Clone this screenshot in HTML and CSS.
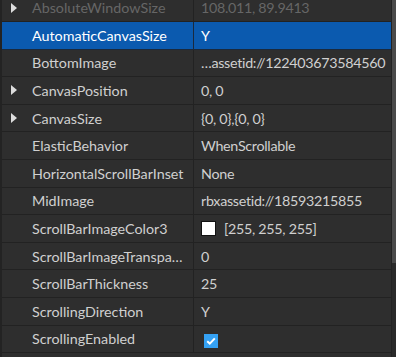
FILE: index.html
```html
<!DOCTYPE html>
<html>
<head>
<meta charset="utf-8">
<link rel="stylesheet" href="styles.css">
</head>
<body>
<div class="panel">
  <div class="list">
    <div class="row disabled"><div class="name"><span class="arrow"></span>AbsoluteWindowSize</div><div class="value">108.011, 89.9413</div></div>
    <div class="row selected"><div class="name">AutomaticCanvasSize</div><div class="value">Y</div></div>
    <div class="row"><div class="name">BottomImage</div><div class="value">…assetid://122403673584560</div></div>
    <div class="row"><div class="name"><span class="arrow"></span>CanvasPosition</div><div class="value">0, 0</div></div>
    <div class="row"><div class="name"><span class="arrow"></span>CanvasSize</div><div class="value">{0, 0},{0, 0}</div></div>
    <div class="row"><div class="name">ElasticBehavior</div><div class="value">WhenScrollable</div></div>
    <div class="row"><div class="name">HorizontalScrollBarInset</div><div class="value">None</div></div>
    <div class="row"><div class="name">MidImage</div><div class="value">rbxassetid://18593215855</div></div>
    <div class="row"><div class="name">ScrollBarImageColor3</div><div class="value"><span class="swatch"></span>[255, 255, 255]</div></div>
    <div class="row"><div class="name"><span class="clip">ScrollBarImageTranspa…</span></div><div class="value">0</div></div>
    <div class="row"><div class="name">ScrollBarThickness</div><div class="value">25</div></div>
    <div class="row"><div class="name">ScrollingDirection</div><div class="value">Y</div></div>
    <div class="row"><div class="name">ScrollingEnabled</div><div class="value"><span class="check"><svg width="14" height="14" viewBox="0 0 14 14"><path d="M3.2 7.2 L5.8 9.6 L10.8 4.4" fill="none" stroke="#ffffff" stroke-width="2"/></svg></span></div></div>
  </div>
  <div class="scrollbar"><div class="thumb"></div></div>
</div>
</body>
</html>
```
FILE: styles.css
```css
html, body {
  margin: 0;
  padding: 0;
  background: #2e2e2e;
  overflow: hidden;
}
body {
  width: 396px;
  height: 357px;
  font-family: Lato, "Noto Sans", sans-serif;
  font-size: 14.3px;
  color: #d0d0d0;
}
.panel {
  display: flex;
  height: 357px;
  overflow: hidden;
}
.list {
  flex: 1;
  margin-top: -5.6px;
  border-left: 2px solid #232323;
  border-right: 1px solid #232323;
}
.row {
  display: flex;
  height: 26.6px;
  border-bottom: 1px solid #222222;
  align-items: stretch;
}
.name {
  width: 192px;
  flex: none;
  border-right: 1px solid #222222;
  display: flex;
  align-items: center;
  padding-left: 30px;
  box-sizing: border-box;
  position: relative;
  white-space: nowrap;
  overflow: hidden;
}
.clip {
  white-space: nowrap;
}
.value {
  flex: 1;
  display: flex;
  align-items: center;
  padding-left: 7px;
  white-space: nowrap;
  overflow: hidden;
  letter-spacing: -0.3px;
}
.arrow {
  position: absolute;
  left: 9px;
  top: 50%;
  margin-top: -5px;
  width: 0;
  height: 0;
  border-top: 5px solid transparent;
  border-bottom: 5px solid transparent;
  border-left: 6px solid #dddddd;
}
.disabled .name, .disabled .value {
  color: #666666;
}
.selected {
  background: #0b5aaf;
  color: #ffffff;
  border-bottom-color: #1a2a3e;
}
.selected .name {
  border-right-color: #1a2a3e;
}
.swatch {
  display: inline-block;
  width: 13px;
  height: 13px;
  background: #ffffff;
  border: 1px solid #111111;
  margin-right: 8px;
}
.check {
  display: inline-block;
  width: 14px;
  height: 14px;
  background: #35a2f4;
  margin-left: 3px;
  margin-top: 4px;
}
.check svg {
  display: block;
}
.scrollbar {
  width: 4px;
  flex: none;
  background: #2a2a2a;
}
.thumb {
  height: 263px;
  background: #4a4a4a;
}
```
